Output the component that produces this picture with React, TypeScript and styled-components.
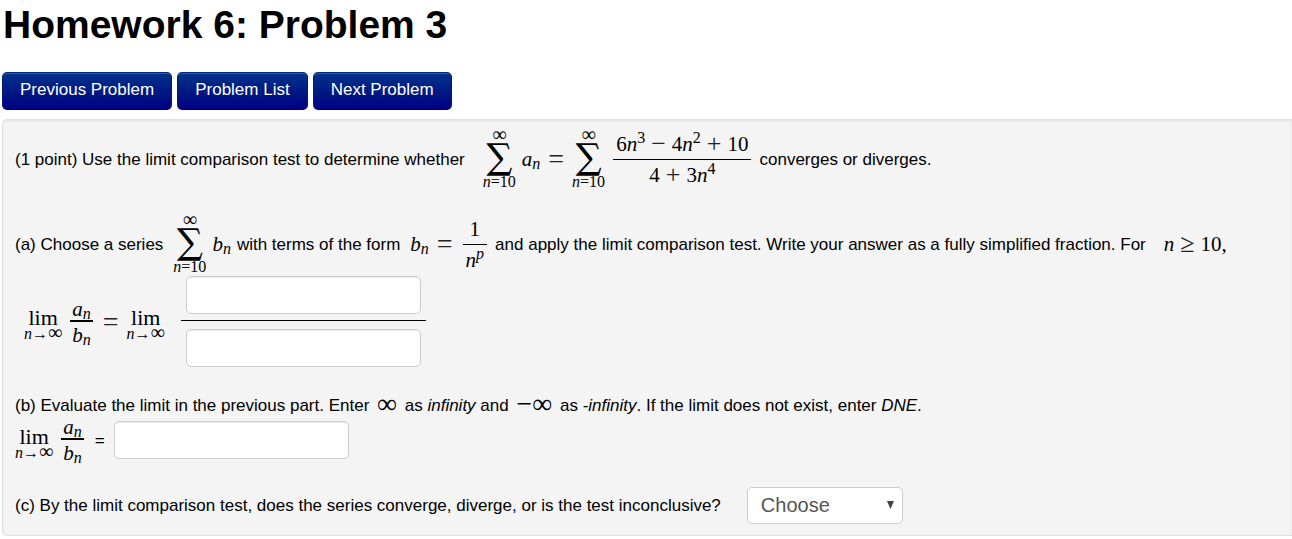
import React from "react";
import styled, { createGlobalStyle } from "styled-components";

const GlobalStyle = createGlobalStyle`
  *, *::before, *::after { box-sizing: border-box; }
  body {
    margin: 0;
    background: #fff;
    color: #000;
    font-family: "Liberation Sans", Arial, Helvetica, sans-serif;
    font-size: 17px;
    line-height: 25px;
  }
`;

const Page = styled.main`
  padding: 0 0 3px 2px;
`;

const Title = styled.h1`
  margin: 0 0 22px 1px;
  font-size: 39px;
  line-height: 50px;
  font-weight: bold;
`;

const Nav = styled.nav`
  display: flex;
  gap: 5px;
  margin-bottom: 9px;
`;

const NavButton = styled.button`
  height: 38px;
  padding: 0 17px 3px;
  border: 1px solid #001a66;
  border-color: #002a80 #001a80 #000060;
  border-radius: 5px;
  background: linear-gradient(to bottom, #003388, #000080);
  box-shadow: inset 0 1px 0 rgba(255, 255, 255, 0.2);
  color: #fff;
  font: inherit;
  cursor: pointer;
`;

const Well = styled.section`
  padding: 9px 12px 11px;
  border: 1px solid #e0e0e0;
  border-right: 0;
  border-radius: 5px 0 0 5px;
  background: #f4f4f4;
  box-shadow: inset 0 1px 2px rgba(0, 0, 0, 0.08);
`;

const Row = styled.div<{ $top?: number; $indent?: number }>`
  display: flex;
  align-items: center;
  gap: 6px;
  margin-top: ${(p) => p.$top ?? 0}px;
  padding-left: ${(p) => p.$indent ?? 0}px;
`;

const Phrase = styled.span<{ $after?: number }>`
  padding-right: ${(p) => p.$after ?? 0}px;
`;

const MathText = styled.span`
  font-family: "Liberation Serif", "Times New Roman", serif;
  font-size: 21px;
  line-height: 24px;
  white-space: nowrap;

  sub, sup {
    font-size: 16px;
    line-height: 0;
  }
  sub { vertical-align: -3px; }
  sup { vertical-align: 8px; }
`;

const Op = styled.span`
  margin: 0 6px;
  color: #222;
  font-size: 26px;
  line-height: 0;
  vertical-align: -1px;
`;

const Big = styled.span`
  margin: 0 3px;
  font-size: 28px;
  line-height: 0;
  vertical-align: -2px;
`;

const Relation = styled(MathText)`
  margin: 0 2px;
  color: #222;
  font-size: 28px;
`;

const Equals = styled.span`
  margin: 0 3px;
`;

const Stack = styled(MathText)`
  display: inline-flex;
  flex-direction: column;
  align-items: center;
`;

const LimitStack = styled(Stack)`
  padding-top: 7px;
`;

const FractionStack = styled(Stack)`
  margin: 0 2px;
`;

const Limit = styled.span`
  font-size: 16px;
  line-height: 14px;
`;

const Infinity = styled.span`
  font-size: 20px;
  line-height: 0;
`;

const Sigma = styled.span`
  font-family: "DejaVu Math TeX Gyre", "Liberation Serif", serif;
  font-size: 31px;
  line-height: 32px;
`;

const Lim = styled.span`
  font-size: 22px;
  line-height: 18px;
`;

const Top = styled.span`
  display: flex;
  justify-content: center;
  align-self: stretch;
  padding: 0 3px 3px;
  border-bottom: 1px solid #000;
`;

const Bottom = styled.span`
  padding: 3px 3px 0;
`;

const TightTop = styled(Top)`
  padding: 0 2px 2px;
  border-bottom-width: 2px;
  line-height: 18px;
`;

const TightBottom = styled(Bottom)`
  padding: 4px 2px 0;
  line-height: 18px;
`;

const AnswerFraction = styled.span`
  display: inline-flex;
  flex-direction: column;
  margin-left: 10px;
`;

const AnswerTop = styled.span`
  padding: 0 5px 6px;
  border-bottom: 1px solid #000;
`;

const AnswerBottom = styled.span`
  padding: 8px 5px 0;
`;

const Answer = styled.input`
  display: block;
  width: 235px;
  height: 38px;
  padding: 4px 8px;
  border: 1px solid #ccc;
  border-radius: 5px;
  background: #fff;
  box-shadow: inset 0 1px 1px rgba(0, 0, 0, 0.075);
  font: inherit;
`;

const SelectBox = styled.span`
  position: relative;
  display: inline-flex;
`;

const Choice = styled.select`
  appearance: none;
  width: 156px;
  height: 37px;
  padding: 0 30px 0 13px;
  border: 1px solid #ccc;
  border-radius: 5px;
  background: #fff;
  color: #555;
  font: inherit;
  font-size: 20px;
`;

const Caret = styled.svg`
  position: absolute;
  right: 9px;
  top: 14px;
  pointer-events: none;
`;

const Series = () => (
  <Stack>
    <Limit><Infinity>∞</Infinity></Limit>
    <Sigma>∑</Sigma>
    <Limit><i>n</i>=10</Limit>
  </Stack>
);

const Limiting = () => (
  <LimitStack>
    <Lim>lim</Lim>
    <Limit><i>n</i>→<Infinity>∞</Infinity></Limit>
  </LimitStack>
);

const Term = ({ name }: { name: string }) => (
  <MathText><i>{name}<sub>n</sub></i></MathText>
);

const Fraction = ({ top, bottom }: { top: React.ReactNode; bottom: React.ReactNode }) => (
  <FractionStack>
    <Top><span>{top}</span></Top>
    <Bottom>{bottom}</Bottom>
  </FractionStack>
);

const Ratio = () => (
  <FractionStack>
    <TightTop><i>a<sub>n</sub></i></TightTop>
    <TightBottom><i>b<sub>n</sub></i></TightBottom>
  </FractionStack>
);

export default function App() {
  return (
    <Page>
      <GlobalStyle />
      <Title>Homework 6: Problem 3</Title>
      <Nav>
        <NavButton type="button">Previous Problem</NavButton>
        <NavButton type="button">Problem List</NavButton>
        <NavButton type="button">Next Problem</NavButton>
      </Nav>
      <Well>
        <Row>
          <Phrase $after={12}>(1 point) Use the limit comparison test to determine whether</Phrase>
          <Series />
          <Term name="a" />
          <Relation>=</Relation>
          <Series />
          <Fraction
            top={<>6<i>n</i><sup>3</sup><Op>−</Op>4<i>n</i><sup>2</sup><Op>+</Op>10</>}
            bottom={<>4<Op>+</Op>3<i>n</i><sup>4</sup></>}
          />
          <Phrase>converges or diverges.</Phrase>
        </Row>
        <Row $top={25}>
          <Phrase $after={4}>(a) Choose a series</Phrase>
          <Series />
          <Term name="b" />
          <Phrase $after={4}>with terms of the form</Phrase>
          <Term name="b" />
          <Relation>=</Relation>
          <Fraction top="1" bottom={<i>n<sup>p</sup></i>} />
          <Phrase $after={12}>and apply the limit comparison test. Write your answer as a fully simplified fraction. For</Phrase>
          <MathText><i>n</i><Op>≥</Op>10,</MathText>
        </Row>
        <Row $top={2} $indent={9}>
          <Limiting />
          <Ratio />
          <Relation>=</Relation>
          <Limiting />
          <AnswerFraction>
            <AnswerTop><Answer type="text" aria-label="Numerator" /></AnswerTop>
            <AnswerBottom><Answer type="text" aria-label="Denominator" /></AnswerBottom>
          </AnswerFraction>
        </Row>
        <Row $top={25}>
          <Phrase>
            (b) Evaluate the limit in the previous part. Enter <MathText><Big>∞</Big></MathText> as <i>infinity</i> and <MathText><Big>−∞</Big></MathText> as <i>-infinity</i>. If the limit does not exist, enter <i>DNE</i>.
          </Phrase>
        </Row>
        <Row>
          <Limiting />
          <Ratio />
          <Equals>=</Equals>
          <Answer type="text" aria-label="Value of the limit" />
        </Row>
        <Row $top={25}>
          <Phrase as="label" htmlFor="verdict" $after={20}>
            (c) By the limit comparison test, does the series converge, diverge, or is the test inconclusive?
          </Phrase>
          <SelectBox>
            <Choice id="verdict" defaultValue="Choose">
              <option>Choose</option>
              <option>Converges</option>
              <option>Diverges</option>
              <option>Inconclusive</option>
            </Choice>
            <Caret width="7" height="8" viewBox="0 0 7 8" aria-hidden="true">
              <path d="M0 0H7L3.5 8Z" fill="#444" />
            </Caret>
          </SelectBox>
        </Row>
      </Well>
    </Page>
  );
}
